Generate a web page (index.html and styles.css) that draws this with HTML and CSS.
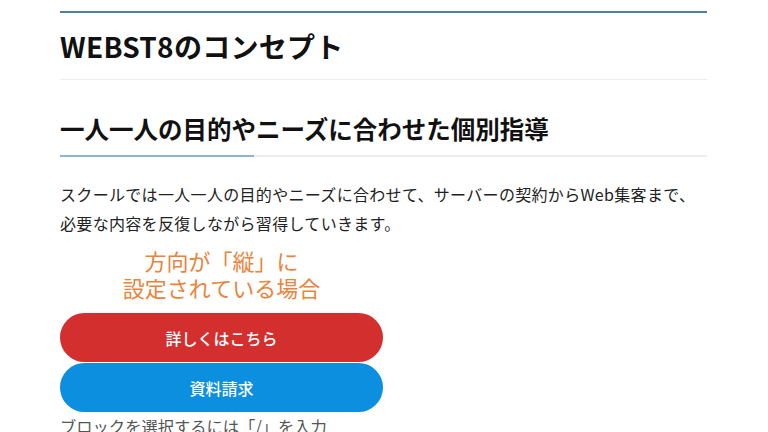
FILE: index.html
```html
<!DOCTYPE html>
<html lang="ja">
<head>
<meta charset="utf-8">
<link rel="stylesheet" href="styles.css">
</head>
<body>
<main class="page">
  <h1 class="title">WEBST8のコンセプト</h1>
  <h2 class="subtitle">一人一人の目的やニーズに合わせた個別指導</h2>
  <p class="lead">スクールでは一人一人の目的やニーズに合わせて、サーバーの契約からWeb集客まで、<br>必要な内容を反復しながら習得していきます。</p>
  <div class="buttons">
    <p class="note">方向が「縦」に<br>設定されている場合</p>
    <a class="btn btn-red" href="#">詳しくはこちら</a>
    <a class="btn btn-blue" href="#">資料請求</a>
  </div>
  <p class="hint">ブロックを選択するには「/」を入力</p>
</main>
</body>
</html>
```
FILE: styles.css
```css
html, body {
  margin: 0;
  padding: 0;
  background: #fff;
}
body {
  font-family: "Noto Sans CJK JP", "Noto Sans", sans-serif;
  color: #1a1a1a;
}
.page {
  width: 647px;
  margin-left: 60px;
  padding-top: 11px;
  overflow: hidden;
  height: 421px;
}
.title {
  margin: 0;
  border-top: 2px solid #4f7fa3;
  border-bottom: 1px solid #ececec;
  font-size: 28px;
  font-weight: 700;
  line-height: 66px;
  height: 66px;
  color: #111;
  letter-spacing: 0.01em;
}
.subtitle {
  margin: 0;
  margin-top: 22px;
  font-size: 24.5px;
  font-weight: 700;
  line-height: 54px;
  padding-bottom: 1px;
  color: #111;
  background:
    linear-gradient(#8fb3d0, #8fb3d0) left bottom / 194px 2px no-repeat,
    linear-gradient(#ededed, #ededed) left bottom / 100% 2px no-repeat;
}
.lead {
  margin: 23px 0 0;
  font-size: 16px;
  line-height: 29px;
  color: #222;
  letter-spacing: 0.02em;
}
.buttons {
  width: 323px;
  display: flex;
  flex-direction: column;
  margin-top: 9px;
}
.note {
  margin: 0 0 12px;
  text-align: center;
  color: #e8843c;
  font-size: 22px;
  line-height: 27px;
}
.btn {
  display: flex;
  align-items: center;
  justify-content: center;
  height: 49px;
  border-radius: 25px;
  color: #fff;
  text-decoration: none;
  font-size: 16px;
  font-weight: 500;
}
.btn-red {
  background: #d32f2f;
}
.btn-blue {
  background: #0b8fde;
  margin-top: 1px;
}
.hint {
  margin: 1px 0 0;
  font-size: 16.3px;
  line-height: 26px;
  color: #555;
}
```
